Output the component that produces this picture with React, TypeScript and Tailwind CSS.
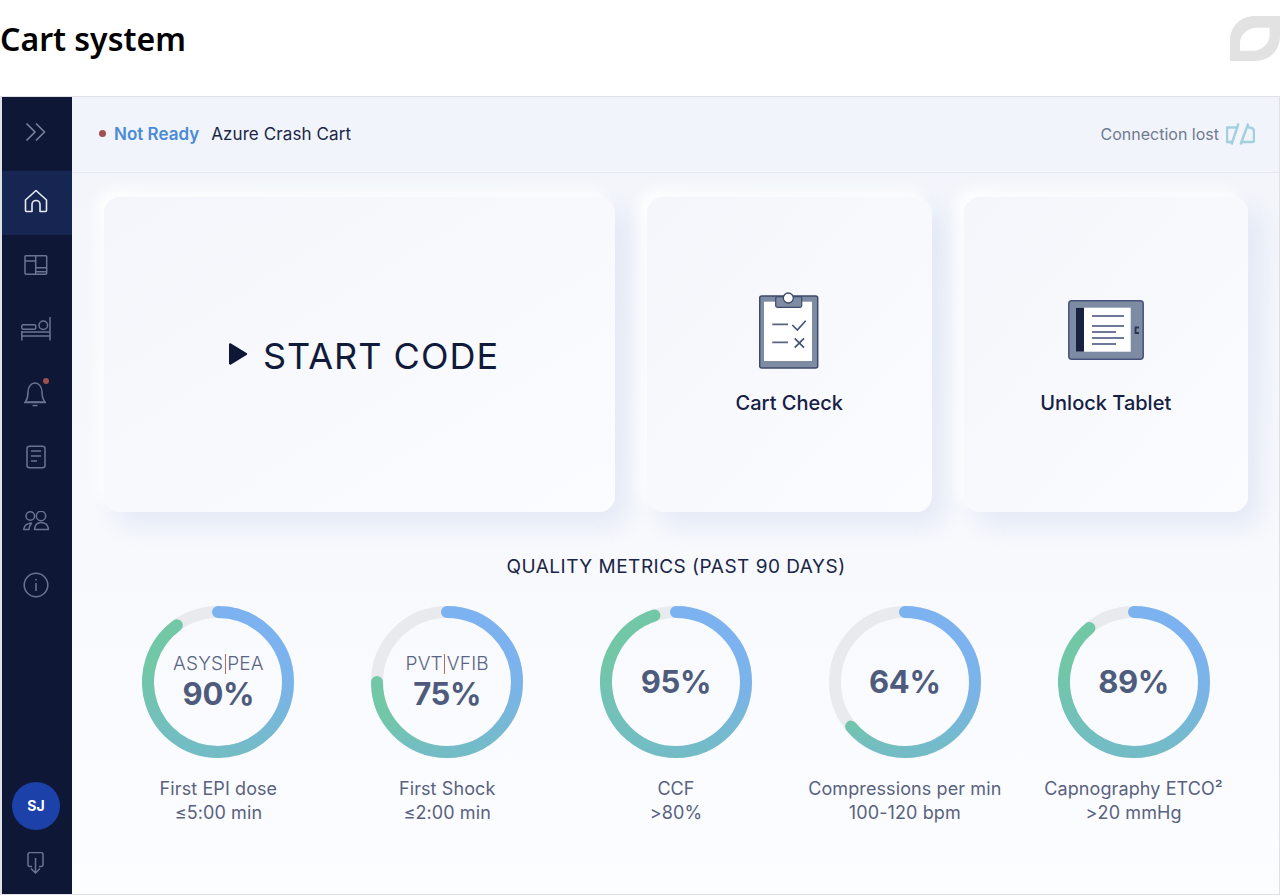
import { ReactNode } from 'react';

const iconClass = 'fill-none stroke-[#6b7391]';
const cardClass = 'rounded-2xl bg-gradient-to-br from-[#f4f6fb] to-[#fbfcff] shadow-[12px_14px_24px_rgba(190,202,232,0.32),-7px_-7px_14px_rgba(255,255,255,1)]';

function RailItem({ active, children }: { active?: boolean; children: ReactNode }) {
  return (
    <div className={`h-16 pb-1 pr-[2px] flex items-center justify-center ${active ? 'bg-[#172552]' : ''}`}>
      {children}
    </div>
  );
}

function Ring({ id, pct, tag, value, line1, line2 }: {
  id: string;
  pct: number;
  tag?: [string, string];
  value: string;
  line1: ReactNode;
  line2: string;
}) {
  const r = 70;
  const c = 76;
  const a = (pct / 100) * Math.PI * 2;
  const ex = c + r * Math.sin(a);
  const ey = c - r * Math.cos(a);
  return (
    <div className="flex flex-col items-center">
      <div className="grid w-[152px] h-[152px]">
        <svg viewBox="0 0 152 152" width="152" height="152" className="[grid-area:1/1]">
          <defs>
            <linearGradient id={`${id}-r`} gradientUnits="userSpaceOnUse" x1="0" y1="40" x2="0" y2="146">
              <stop offset="0" stopColor="#7cb2f0" />
              <stop offset="0.45" stopColor="#7ab4e6" />
              <stop offset="1" stopColor="#73bcc6" />
            </linearGradient>
            <linearGradient id={`${id}-l`} gradientUnits="userSpaceOnUse" x1="0" y1="146" x2="0" y2={Math.min(ey + 40, 110)}>
              <stop offset="0" stopColor="#73bcc6" />
              <stop offset="1" stopColor="#72c7a6" />
            </linearGradient>
          </defs>
          <circle cx={c} cy={c} r={r} fill="none" stroke="#e8eaee" strokeWidth="12" />
          <path d={`M${c} ${c + r} A${r} ${r} 0 0 1 ${ex} ${ey}`} fill="none" stroke={`url(#${id}-l)`} strokeWidth="12" strokeLinecap="round" />
          <path d={`M${c} ${c - r} A${r} ${r} 0 0 1 ${c} ${c + r}`} fill="none" stroke={`url(#${id}-r)`} strokeWidth="12" strokeLinecap="round" />
        </svg>
        <div className="[grid-area:1/1] flex flex-col items-center justify-center text-[#4f5b7c]">
          {tag && (
            <div className="flex items-center h-6 text-[19px] font-light tracking-[0.15px] text-[#5a6484]">
              <span>{tag[0]}</span>
              <span className="w-px h-5 bg-[#a8705f] mx-[1.5px]" />
              <span>{tag[1]}</span>
            </div>
          )}
          <div className="text-[31px] leading-9 font-bold tracking-[-0.3px]">{value}</div>
        </div>
      </div>
      <div className="mt-[19px] text-center text-lg leading-6 tracking-[0.1px] text-[#59627f]">
        <div>{line1}</div>
        <div>{line2}</div>
      </div>
    </div>
  );
}

function ActionCard({ icon, label }: { icon: ReactNode; label: string }) {
  return (
    <div className={`${cardClass} flex flex-col items-center`}>
      <div className="h-[172px] flex items-end">{icon}</div>
      <div className="mt-5 text-xl leading-7 font-medium text-[#162043]">{label}</div>
    </div>
  );
}

export default function App() {
  return (
    <div className="h-[896px] bg-white flex flex-col font-['Inter',sans-serif] overflow-hidden">
      <header className="h-24 shrink-0 flex items-start justify-between">
        <h1 className="mt-[17px] font-['Noto_Sans',sans-serif] text-[32px] leading-[44px] font-semibold text-black">Cart system</h1>
        <svg viewBox="0 0 50 45" width="50" height="45" className="mt-4 shrink-0">
          <path fillRule="evenodd" fill="#e2e2e2" d="M0 45V25C0 10 11 0 25 0H50V20C50 35 39 45 25 45ZM10 34.700H24C32 34 39 28 39.500 20V11.700H27C18 12 10 18 10 27Z" />
        </svg>
      </header>

      <div className="h-[799px] flex border-t border-r border-b border-l-2 border-[#dfe1e4]">
        <aside className="w-[70px] shrink-0 bg-[#0e1836] flex flex-col">
          <div className="h-[74px] pb-1 pr-[2px] flex items-center justify-center">
            <svg viewBox="0 0 24 24" width="24" height="24" className="fill-none stroke-[#7a8299] stroke-[1.6]">
              <path d="M2.500 3.500 11 12l-8.500 8.500M12 3.500 20.500 12 12 20.500" />
            </svg>
          </div>
          <RailItem active>
            <svg viewBox="0 0 24 24" width="24" height="24" className="fill-none stroke-[#e8ebf2] stroke-[1.6]">
              <path d="M1.500 11 12 1.500 22.500 11v10.500a1 1 0 0 1-1 1H16v-7a4 4 0 0 0-8 0v7H2.500a1 1 0 0 1-1-1Z" strokeLinejoin="round" />
            </svg>
          </RailItem>
          <RailItem>
            <svg viewBox="0 0 24 24" width="24" height="24" className={`${iconClass} stroke-[1.5]`}>
              <rect x="1" y="2.700" width="21.700" height="18.600" rx="1" />
              <path d="M1 8h10.700M11.700 2.700v18.600M11.700 14.700h11M11.700 18.700h11" />
            </svg>
          </RailItem>
          <RailItem>
            <svg viewBox="0 0 30 24" width="30" height="24" className={`${iconClass} stroke-[1.5]`}>
              <rect x=".8" y="7.700" width="14" height="4.600" rx="1.500" />
              <circle cx="22.300" cy="8.300" r="4.300" />
              <path d="M29 0v23.500M.8 14v9.500M.8 15h28.200M.8 19h28.200" />
            </svg>
          </RailItem>
          <RailItem>
            <svg viewBox="0 0 28 30" width="28" height="30" className={`${iconClass} stroke-[1.5]`}>
              <path d="M3.500 24c2-3 2.500-5 2.500-10 0-5 3-9 7-9s7 4 7 9c0 5 .5 7 3 10Z" strokeLinejoin="round" />
              <path d="M2 24.500h22M10.500 27.500h5" />
              <circle cx="24" cy="3" r="3" className="fill-[#a04f4f] stroke-none" />
            </svg>
          </RailItem>
          <RailItem>
            <svg viewBox="0 0 24 24" width="24" height="24" className={`${iconClass} stroke-[1.5]`}>
              <rect x="3" y="1.200" width="18" height="21.500" rx="2.500" />
              <path d="M7 6h10M7 11h10M7 16h6" />
            </svg>
          </RailItem>
          <RailItem>
            <svg viewBox="0 0 26 20" width="26" height="20" className={`${iconClass} stroke-[1.5]`}>
              <circle cx="7.300" cy="5" r="4.300" />
              <circle cx="18" cy="5" r="4.700" />
              <path d="M11.500 18.500C12 13 15 11.500 18 11.500c4 0 7 2.500 7.500 7ZM.7 18.500C1 15 3.500 12.500 8.500 12 7 14 6 16 6 18.500Z" strokeLinejoin="round" />
            </svg>
          </RailItem>
          <RailItem>
            <svg viewBox="0 0 26 26" width="26" height="26" className={`${iconClass} stroke-[1.5]`}>
              <circle cx="13" cy="13" r="11.800" />
              <path d="M13 11v8M13 7v1.500" />
            </svg>
          </RailItem>
          <div className="flex-1 flex flex-col items-center justify-end pr-[2px]">
            <div className="w-12 h-12 rounded-full bg-[#1c41a8] flex items-center justify-center text-white text-sm font-bold">SJ</div>
            <div className="h-16 flex items-center justify-center">
              <svg viewBox="0 0 18 22" width="18" height="22" className={`${iconClass} stroke-[1.5] mt-[2px]`}>
                <path d="M5 14.500H3a2 2 0 0 1-2-2V2.500a2 2 0 0 1 2-2h11a2 2 0 0 1 2 2v10a2 2 0 0 1-2 2h-2M8.500 6v15M4 16.500 8.500 21l4.500-4.500" />
              </svg>
            </div>
          </div>
        </aside>

        <main className="flex-1 flex flex-col bg-gradient-to-b from-[#f1f4fa] to-[#fcfdff]">
          <div className="h-[76px] shrink-0 pl-[27px] pr-[24px] pb-[2px] flex items-center justify-between border-b border-[#e6e9ef] bg-[#f1f4fa]">
            <div className="flex items-center text-[17px] leading-6">
              <span className="w-[7px] h-[7px] rounded-full bg-[#a05050] mr-[8px]" />
              <span className="font-semibold text-[#4a8bd8]">Not Ready</span>
              <span className="ml-[12px] font-normal tracking-[0.1px] text-[#1a2547]">Azure Crash Cart</span>
            </div>
            <div className="flex items-center text-base text-[#6f7a90]">
              <span>Connection lost</span>
              <svg viewBox="0 0 29 22" width="29" height="22" className="ml-[7px] fill-none stroke-[#a3cfdf] stroke-[2.4]">
                <path d="M11.500 4.500H1V19h6M12.500.5 5.500 21.500M22.300.5 14.500 21.500M22 4.500h2Q28 5 28 9v8.500q0 1.500-2 1.500H15" />
              </svg>
            </div>
          </div>

          <div className="pl-8 pr-[31px] pt-6 flex flex-col">
            <div className="grid grid-cols-[511px_1fr_1fr] gap-8 h-[315px]">
              <div className={`${cardClass} pl-[8px] flex items-center justify-center`}>
                <svg viewBox="0 0 20 24" width="20" height="24" className="mr-[15px] -mt-px fill-[#0e1836]">
                  <path d="M1 2.500v19c0 1 1 1.500 2 1L18.500 13c1-.6 1-1.500 0-2L3 1.500c-1-.5-2 0-2 1Z" />
                </svg>
                <span className="text-[36px] leading-10 font-normal text-[#101a3a] tracking-[1px] mt-[3px]">START CODE</span>
              </div>
              <ActionCard
                label="Cart Check"
                icon={
                  <svg viewBox="0 0 60 77" width="60" height="77">
                    <rect x=".7" y="4" width="58" height="72" rx="2" fill="#7d8ba3" stroke="#3f4a6b" strokeWidth="1.500" />
                    <rect x="5" y="9.700" width="48" height="59.300" fill="#fff" />
                    <rect x="16.700" y="4.700" width="26" height="10.600" rx="1.500" fill="#7d8ba3" stroke="#3f4a6b" strokeWidth="1.200" />
                    <circle cx="29.300" cy="6" r="5" fill="#fff" stroke="#3f4a6b" strokeWidth="1.300" />
                    <path d="M13.300 32.300H29M13.300 50.300H29" stroke="#5a6585" strokeWidth="1.700" fill="none" />
                    <path d="M33.300 33l5 5 8.400-9.300M35.700 46.300l9.300 9.400M45 46.300l-9.300 9.400" stroke="#46527a" strokeWidth="1.700" fill="none" />
                  </svg>
                }
              />
              <ActionCard
                label="Unlock Tablet"
                icon={
                  <svg viewBox="0 0 76 60" width="76" height="60" className="mb-[9px]">
                    <rect x=".8" y=".8" width="74.400" height="58.400" rx="3" fill="#7d8ba3" stroke="#46527a" strokeWidth="1.500" />
                    <rect x="8" y="7.700" width="54.700" height="44" fill="#fff" />
                    <rect x="8" y="7.700" width="8" height="44" fill="#182240" />
                    <path d="M24 16h32M24 26h32M24 32h24M24 38h32M24 44h24" stroke="#6e7898" strokeWidth="2" fill="none" />
                    <path d="M71 27.500h-3.500V33H71" stroke="#2a3454" strokeWidth="1.800" fill="none" />
                  </svg>
                }
              />
            </div>

            <h2 className="mt-[41px] text-[19px] leading-7 text-center text-[#1a2547] uppercase tracking-[0.5px]">Quality metrics (past 90 days)</h2>

            <div className="mt-[25px] grid grid-cols-5">
              <Ring id="a" pct={90} tag={['ASYS', 'PEA']} value="90%" line1="First EPI dose" line2="≤5:00 min" />
              <Ring id="b" pct={75} tag={['PVT', 'VFIB']} value="75%" line1="First Shock" line2="≤2:00 min" />
              <Ring id="c" pct={95} value="95%" line1="CCF" line2=">80%" />
              <Ring id="d" pct={64} value="64%" line1="Compressions per min" line2="100-120 bpm" />
              <Ring id="e" pct={89} value="89%" line1="Capnography ETCO²" line2=">20 mmHg" />
            </div>
          </div>
        </main>
      </div>
    </div>
  );
}
